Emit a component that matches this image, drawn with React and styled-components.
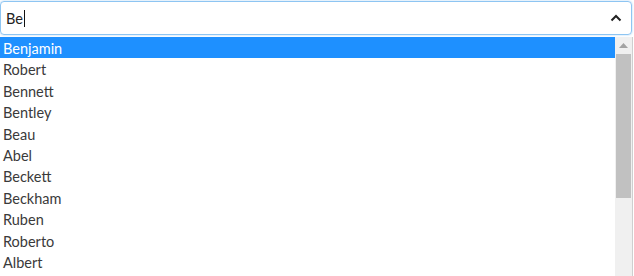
import React from "react";
import styled, { createGlobalStyle } from "styled-components";

const GlobalStyle = createGlobalStyle`
  html, body {
    margin: 0;
    padding: 0;
    background: #ffffff;
    overflow: hidden;
  }
  body {
    font-family: "Lato", "Noto Sans", sans-serif;
  }
`;

const Page = styled.div`
  width: 634px;
  height: 276px;
  padding-top: 1px;
  box-sizing: border-box;
  overflow: hidden;
`;

const Combo = styled.div`
  width: 632px;
  height: 34px;
  box-sizing: border-box;
  border: 1px solid #8ec5f2;
  border-radius: 4px;
  box-shadow: 0 0 2px rgba(100, 170, 235, 0.6);
  display: flex;
  align-items: center;
  padding: 0 8px 0 5px;
  font-size: 14.5px;
  color: #222;
`;

const Value = styled.div`
  flex: 1;
  display: flex;
  align-items: center;
`;

const Caret = styled.span`
  display: inline-block;
  width: 1px;
  height: 17px;
  background: #111;
  margin-left: 1px;
`;

const Chevron = styled.svg`
  width: 12px;
  height: 8px;
  margin-right: 1px;
`;

const Dropdown = styled.div`
  margin-top: 2px;
  width: 633px;
  display: flex;
  height: 260px;
`;

const List = styled.ul`
  list-style: none;
  margin: 0;
  padding: 0;
  flex: 1;
`;

const Option = styled.li`
  height: 21.4px;
  line-height: 23px;
  padding-left: 3px;
  font-size: 14.5px;
  overflow: hidden;
  color: ${(p) => (p.$active ? "#ffffff" : "#3a3a3a")};
  background: ${(p) => (p.$active ? "#1e90ff" : "transparent")};
`;

const Scrollbar = styled.div`
  width: 18px;
  box-sizing: border-box;
  background: #f0f0f0;
  border-right: 1px solid #cfcfcf;
  display: flex;
  flex-direction: column;
  align-items: center;
`;

const ArrowBtn = styled.div`
  height: 17px;
  width: 17px;
  display: flex;
  align-items: center;
  justify-content: center;
`;

const Thumb = styled.div`
  width: 15px;
  height: 144px;
  background: #c1c1c1;
`;

const names = [
  "Benjamin",
  "Robert",
  "Bennett",
  "Bentley",
  "Beau",
  "Abel",
  "Beckett",
  "Beckham",
  "Ruben",
  "Roberto",
  "Albert",
];

export default function App() {
  return (
    <Page>
      <GlobalStyle />
      <Combo>
        <Value>
          Be
          <Caret />
        </Value>
        <Chevron viewBox="0 0 12 8">
          <polyline
            points="1.5,6.5 6,2 10.5,6.5"
            fill="none"
            stroke="#222"
            strokeWidth="2"
          />
        </Chevron>
      </Combo>
      <Dropdown>
        <List>
          {names.map((n, i) => (
            <Option key={n} $active={i === 0}>
              {n}
            </Option>
          ))}
        </List>
        <Scrollbar>
          <ArrowBtn>
            <svg width="9" height="5" viewBox="0 0 9 5">
              <polygon points="0,5 4.5,0 9,5" fill="#a3a3a3" />
            </svg>
          </ArrowBtn>
          <Thumb />
        </Scrollbar>
      </Dropdown>
    </Page>
  );
}
